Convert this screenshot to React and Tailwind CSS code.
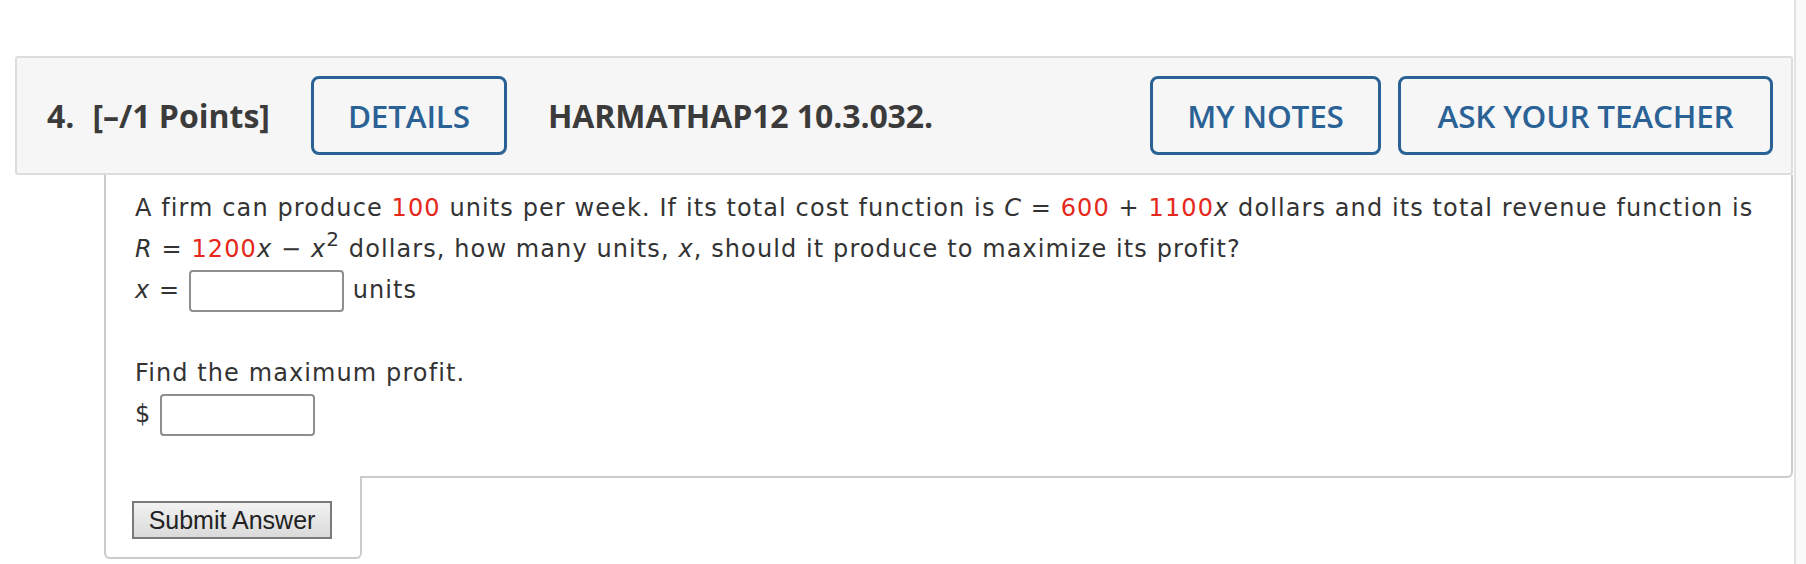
import React from 'react';

const Red = ({ children }) => <span className="text-[#e5281b]">{children}</span>;
const V = ({ children }) => <i className="italic">{children}</i>;

const HeadButton = ({ label, width }) => (
  <button
    className={`${width} h-[79px] border-[3px] border-[#2b6296] rounded-[8px] bg-[#f6f6f6] text-[#2b6296] text-[31.5px] font-semibold tracking-[-0.2px] flex items-center justify-center`}
  >
    {label}
  </button>
);

const AnswerBox = () => (
  <input
    type="text"
    className="w-[155px] h-[42px] align-middle border-2 border-[#8e8e8e] rounded-[4px] bg-white outline-none"
  />
);

const App = () => {
  return (
    <div className="h-[564px] w-full bg-white flex overflow-hidden">
      <div className="flex-1 pt-[56px] pl-[15px] pr-[1px]">
        {/* question header */}
        <div
          className="h-[119px] flex items-center bg-[#f6f6f6] border-2 border-[#dddddd] rounded-[3px] pl-[30px] pr-[18px] text-[#3b3b3b]"
          style={{ fontFamily: '"Open Sans", sans-serif' }}
        >
          <span className="text-[32px] font-bold">4.</span>
          <span className="text-[32px] font-bold ml-[18px]">[–/1 Points]</span>
          <div className="ml-[41px]">
            <HeadButton label="DETAILS" width="w-[196px]" />
          </div>
          <span className="text-[32px] font-bold ml-[41px] tracking-[-0.1px]">HARMATHAP12 10.3.032.</span>
          <div className="flex-1" />
          <HeadButton label="MY NOTES" width="w-[231px]" />
          <div className="ml-[17px]">
            <HeadButton label="ASK YOUR TEACHER" width="w-[375px]" />
          </div>
        </div>

        {/* question body */}
        <div
          className="ml-[89px] border-l-2 border-r-2 border-b-2 border-[#cbcbcb] rounded-br-[6px] pl-[29px] pt-[13px] pb-[40px] text-[24px] leading-[41px] tracking-[1.1px] text-[#333333]"
          style={{ fontFamily: '"DejaVu Sans", Verdana, sans-serif' }}
        >
          <div className="whitespace-nowrap">
            A firm can produce <Red>100</Red> units per week. If its total cost function is <V>C</V> = <Red>600</Red> + <Red>1100</Red><V>x</V> dollars and its total revenue function is
            <br />
            <V>R</V> = <Red>1200</Red><V>x</V> − <V>x</V><sup className="text-[20px] -top-[11px]">2</sup> dollars, how many units, <V>x</V>, should it produce to maximize its profit?
            <br />
            <V>x</V> = <AnswerBox /> units
          </div>
          <div className="h-[41px]" />
          <div>Find the maximum profit.</div>
          <div>
            $ <AnswerBox />
          </div>
        </div>

        {/* submit tab */}
        <div className="relative ml-[89px] -mt-[2px] w-[258px] h-[83px] bg-white border-l-2 border-r-2 border-b-2 border-[#cbcbcb] rounded-b-[6px] pl-[26px] pt-[25px]">
          <button
            className="w-[200px] h-[38px] border-2 border-[#7a7a7a] bg-gradient-to-b from-[#f2f2f2] to-[#dadada] text-[25px] text-[#222222] leading-none"
            style={{ fontFamily: '"Liberation Sans", Arial, sans-serif' }}
          >
            Submit Answer
          </button>
        </div>
      </div>

      {/* scrollbar track */}
      <div className="w-[12px] h-full border-l-2 border-[#e2e2e2] bg-[#f9f9f9]" />
    </div>
  );
};

export default App;
